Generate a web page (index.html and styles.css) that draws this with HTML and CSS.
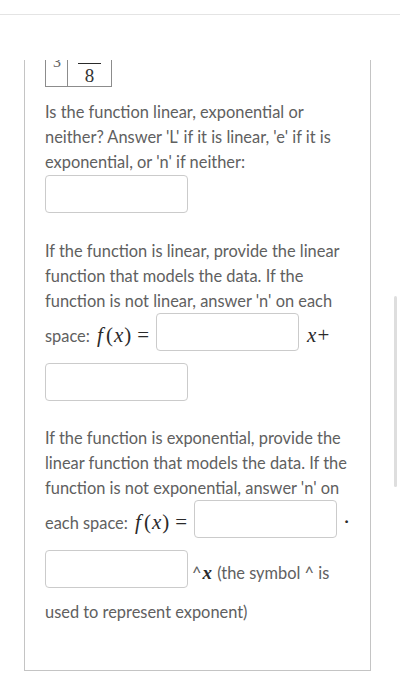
FILE: index.html
```html
<!DOCTYPE html>
<html lang="en">
<head>
<meta charset="utf-8">
<title>Quiz question</title>
<link rel="stylesheet" href="styles.css">
</head>
<body>
<div class="topbar"></div>
<div class="scroller">
  <div class="card">
    <div class="frac-table">
      <div class="cell cell-a"><span class="num-small">3</span></div>
      <div class="cell cell-b">
        <span class="frac-num">5</span>
        <span class="frac-den">8</span>
      </div>
    </div>

    <p class="para first">Is the function linear, exponential or neither? Answer 'L' if it is linear, 'e' if it is exponential, or 'n' if neither:</p>
    <div class="answer box-first"></div>

    <p class="para gap-lg">If the function is linear, provide the linear function that models the data. If the function is not linear, answer 'n' on each</p>
    <div class="eq-row">
      <span class="label">space: <span class="math"><i class="fn">f</i>(<i class="vx">x</i>)<span class="eq">=</span></span></span>
      <div class="answer"></div>
      <span class="label math tail"><i class="vx">x</i>+</span>
    </div>
    <div class="answer stacked"></div>

    <p class="para gap-md">If the function is exponential, provide the linear function that models the data. If the function is not exponential, answer 'n' on</p>
    <div class="eq-row">
      <span class="label">each space: <span class="math"><i class="fn">f</i>(<i class="vx">x</i>)<span class="eq">=</span></span></span>
      <div class="answer"></div>
      <span class="label math cdot">⋅</span>
    </div>
    <div class="eq-row stacked">
      <div class="answer"></div>
      <span class="label note">^<b class="math bx"><i>x</i></b> (the symbol ^ is</span>
    </div>
    <p class="para last">used to represent exponent)</p>
  </div>
  <div class="thumb"></div>
</div>
</body>
</html>
```

FILE: styles.css
```css
html, body {
  margin: 0;
  padding: 0;
  background: #ffffff;
}

body {
  width: 400px;
  height: 700px;
  overflow: hidden;
  font-family: Lato, "Open Sans", "Liberation Sans", sans-serif;
  font-size: 16.4px;
  line-height: 25px;
  color: #606060;
}

.topbar {
  height: 14px;
  border-bottom: 1px solid #e4e4e4;
  margin-bottom: 45px;
}

.scroller {
  position: relative;
  height: 640px;
  overflow: hidden;
}

.card {
  box-sizing: border-box;
  width: 347px;
  margin: -31px 0 0 24px;
  border: 1px solid #c4c4c4;
  padding: 20px 12px 46px 20px;
  background: #fff;
}

/* partial table at top */
.frac-table {
  display: flex;
  font-family: "Liberation Serif", "DejaVu Serif", serif;
  color: #333;
}

.cell {
  box-sizing: border-box;
  height: 37px;
  border-left: 1px solid #8c8c8c;
  border-bottom: 1px solid #8c8c8c;
}

.cell-a {
  width: 22px;
  padding: 4px 0 0 7px;
}

.num-small {
  display: block;
  font-size: 16px;
  line-height: 16px;
  color: #666;
}

.cell-b {
  width: 45px;
  border-right: 1px solid #8c8c8c;
  display: flex;
  flex-direction: column;
  align-items: center;
  justify-content: flex-end;
  padding-bottom: 1px;
}

.frac-num,
.frac-den {
  display: block;
  font-size: 19px;
  line-height: 19px;
}

.frac-num {
  margin-bottom: 2px;
}

.frac-den {
  width: 23px;
  text-align: center;
  border-top: 1px solid #2a2a2a;
  padding-top: 2px;
}

/* text */
.para {
  margin: 0;
}

.para.first { margin-top: 12px; }
.para.gap-lg { margin-top: 25px; }
.para.gap-md { margin-top: 24px; }
.para.last { margin-top: 11px; }

.answer {
  box-sizing: border-box;
  width: 143px;
  height: 38px;
  flex: none;
  border: 1px solid #cbcbcb;
  border-radius: 4px;
  background: #fff;
}

.box-first { margin-top: 1px; }
.stacked { margin-top: 12px; }

.eq-row {
  display: flex;
  align-items: flex-end;
}

.label {
  line-height: 25px;
  padding-bottom: 3px;
  white-space: nowrap;
}

.math {
  font-family: "Liberation Serif", "DejaVu Serif", serif;
  font-size: 21px;
  color: #2a2a2a;
}

.math i { font-style: italic; }

.fn {
  margin: 0 3px 0 3px;
}

.vx {
  margin: 0 1px;
}

.eq {
  margin: 0 7px 0 6px;
}

.tail { margin-left: 7px; }

.cdot { margin-left: 6px; }

.note { margin-left: 4px; }

.bx {
  font-size: 19px;
  font-weight: bold;
  margin: 0 1px;
}

.thumb {
  position: absolute;
  right: 3px;
  top: 236px;
  width: 3px;
  height: 191px;
  background: #dedede;
  border-radius: 2px;
}
```
